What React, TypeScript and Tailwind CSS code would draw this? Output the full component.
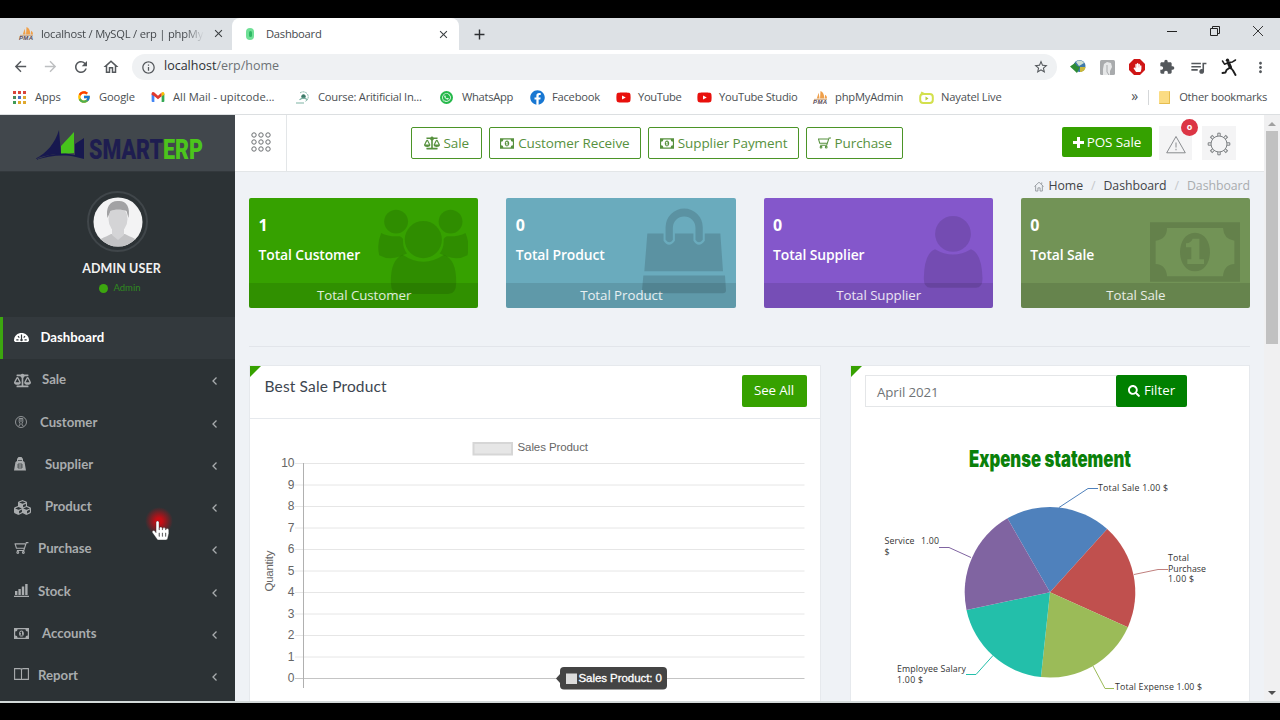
import React from "react";
import clsx from "clsx";
import {
  FaBalanceScale,
  FaCubes,
  FaFacebook,
  FaHandPaper,
  FaHandPointer,
  FaSearch,
  FaWhatsapp,
  FaYoutube,
} from "react-icons/fa";
import { FcGoogle } from "react-icons/fc";
import {
  MdAdd,
  MdArrowBack,
  MdArrowForward,
  MdClose,
  MdExtension,
  MdInfoOutline,
  MdMoreVert,
  MdOutlineHome,
  MdQueueMusic,
  MdRefresh,
  MdStarBorder,
} from "react-icons/md";

/* ---------- small icons ---------- */

const PmaIcon = () => (
  <svg viewBox="0 0 16 14" className="h-[13px] w-[15px] shrink-0 overflow-visible">
    <path d="M4 8 6 2 7 8zM7.5 8 8 0c3 1 4 4 4 8zM12.500 8 13 4c1.500 1 2 2 2 4z" fill="#f0a04a" />
    <path d="M1 9h14" stroke="#c9a27c" strokeWidth="1" />
    <text x="0" y="14" fontSize="6.500" fontWeight="900" fontStyle="italic" fontFamily="Liberation Sans, sans-serif" fill="#5a4a55" textLength="15">
      PMA
    </text>
  </svg>
);

const AppsIcon = () => (
  <svg viewBox="0 0 13 13" className="h-[13px] w-[13px] shrink-0">
    {["#d9453a", "#d9453a", "#d9453a", "#4b8a5a", "#4a6fc0", "#e0a92e", "#3f9b57", "#e0a92e", "#e0a92e"].map(
      (c, i) => (
        <rect key={i} x={(i % 3) * 5} y={Math.floor(i / 3) * 5} width="3" height="3" fill={c} />
      ),
    )}
  </svg>
);

const GmailIcon = () => (
  <svg viewBox="0 0 14 11" className="h-[10px] w-[14px] shrink-0">
    <path d="M0 2h3v9H1a1 1 0 0 1-1-1z" fill="#4285f4" />
    <path d="M11 2h3v8a1 1 0 0 1-1 1h-2z" fill="#34a853" />
    <path d="M0 2C0 0 2-.5 3 .6L7 4l4-3.400v4L7 8 3 4.800 0 3z" fill="#e0392d" />
    <path d="M11 .6C12-.5 14 0 14 2v1l-3 1.800z" fill="#fbbc04" />
  </svg>
);

const CourseIcon = () => (
  <svg viewBox="0 0 14 14" className="h-[14px] w-[14px] shrink-0" fill="none" stroke="#7fb3a3">
    <path d="M4 3a5 5 0 1 1 5 8.500" strokeDasharray="2 .7" />
    <circle cx="7.500" cy="6.500" r="1.800" fill="#3c7a68" stroke="#3c7a68" />
    <path d="M3.500 10c2-2.500 6-2.500 8 0M0 13h8" strokeWidth="1.200" />
  </svg>
);

const NayatelIcon = () => (
  <svg viewBox="0 0 15 13" className="h-[13px] w-[15px] shrink-0" fill="none" stroke="#d3e04c" strokeWidth="2">
    <rect x="1.200" y="3" width="12.600" height="9" rx="3" />
    <path d="M2 1.500 5 3" />
    <path d="m6.500 5.500 3 2-3 2z" fill="#b4c93a" stroke="none" />
  </svg>
);

const RunnerIcon = () => (
  <svg viewBox="0 0 18 18" className="h-[18px] w-[18px]" fill="none" stroke="#1d1d1d" strokeLinecap="round" strokeLinejoin="round">
    <circle cx="7.500" cy="2.200" r="1.700" fill="#1d1d1d" stroke="none" />
    <path d="m8.500 5 2 4.500" strokeWidth="3.200" />
    <path d="M8 4.800 4.500 6.200 2.500 3M9 4.500l3.500-.6L15.500 2" strokeWidth="1.500" />
    <path d="M10 9.500 6.500 12l-1 2.500L2.500 15M10.500 9.500l2.500 3 2.500 4.500" strokeWidth="1.900" />
  </svg>
);

const PlusIcon = () => (
  <svg viewBox="0 0 11 11" className="h-[11px] w-[11px]" fill="currentColor">
    <path d="M4 0h3v4h4v3H7v4H4V7H0V4h4z" />
  </svg>
);

const DashIcon = () => (
  <svg viewBox="0 0 15 9" className="-mt-[2px] h-[9px] w-[15px]">
    <path d="M0 7.500C0-2.500 15-2.500 15 7.500L14 9H1z" fill="currentColor" />
    <path d="M7.500 8V1.500M2.300 6.800h2.200M10.500 6.800h2.200M4 3.200l1.300 1.500M11 3.200 9.700 4.700" stroke="#33393d" strokeWidth="1.200" />
    <circle cx="7.500" cy="7" r="1.200" fill="#33393d" />
  </svg>
);

const UserCircleIcon = () => (
  <svg viewBox="0 0 12 12" className="-mt-[2px] h-3 w-3" fill="none" stroke="currentColor" strokeWidth=".8">
    <circle cx="6" cy="6" r="5.500" />
    <path d="M4.200 2.500h3.600v3L7 7.500V9l1.500 1M4.200 2.500v3L5 7.500V9l-1.500 1M6 3v3" />
  </svg>
);

const WeightIcon = () => (
  <svg viewBox="0 0 12 14" className="-mt-[2px] h-[14px] w-[12px]">
    <path d="M3 4V2l1.500-2h3L9 2v2l1.500 1L12 13.500H0L1.500 5z" fill="currentColor" />
    <path d="M4 3.500h4M4 7h4v4H4zM4 9h4" stroke="#2c3235" strokeWidth=".7" fill="none" />
  </svg>
);

const CartIcon = ({ className }: { className?: string }) => (
  <svg viewBox="0 0 15 13" className={className} fill="none" stroke="currentColor" strokeWidth="1.200">
    <path d="M0 2h11.500M.6 2 2 6.800h8.500M15 .7h-2.300L10 9.200H2.500" />
    <circle cx="3.500" cy="11.300" r="1" />
    <circle cx="9.500" cy="11.300" r="1" />
  </svg>
);

const BarsIcon = () => (
  <svg viewBox="0 0 15 13" className="-mt-[2px] h-[13px] w-[15px]" fill="currentColor">
    <path d="M0 11.800h15V13H0zM1 7h2.400v4H1zM4.400 5h2.400v6H4.400zM7.800 2.500h2.400V11H7.800zM11.200 0h2.400v11h-2.400z" />
  </svg>
);

const BookIcon = () => (
  <svg viewBox="0 0 15 13" className="-mt-[3px] h-[13px] w-[15px]" fill="none" stroke="currentColor" strokeWidth="1.100">
    <path d="M.6 .6h5.200q1.700 0 1.700 1v10.400q0-.6-1.700-.6H.6zM14.400 .6H9.200q-1.700 0-1.700 1v10.400q0-.6 1.700-.6h5.200z" />
  </svg>
);

const CashIcon = ({ className }: { className?: string }) => (
  <svg viewBox="0 0 15 11" className={className}>
    <path
      fillRule="evenodd"
      d="M0 0h15v11H0zM3.600 1.200A2.400 2.400 0 0 1 1.200 3.600v3.800a2.400 2.400 0 0 1 2.400 2.400h7.800a2.400 2.400 0 0 1 2.400-2.400V3.600a2.400 2.400 0 0 1-2.400-2.400z"
      fill="currentColor"
    />
    <path
      fillRule="evenodd"
      d="M7.500 2.400c3.200 0 3.200 6.200 0 6.200s-3.200-6.200 0-6.200zM7.200 3.600l-1 .7v.6h.7v1.900h-.7v.7h2.500v-.7H8V3.600z"
      fill="currentColor"
    />
  </svg>
);

const HouseIcon = () => (
  <svg viewBox="0 0 11 11" className="h-[11px] w-[10px]" fill="none" stroke="#8b8f94" strokeWidth=".9">
    <path d="M.5 5.500 5.500.8l5 4.700M1.800 4.800v5.700h2.500V7h2.400v3.500h2.500V4.800M8.500 3V1" />
  </svg>
);

/* ---------- browser window ---------- */

interface BookmarkItem {
  label: string;
  icon: React.ReactNode;
  className: string;
}

const bookmarks: BookmarkItem[] = [
  { label: "Apps", icon: <AppsIcon />, className: "w-[64px] tracking-[-0.1px]" },
  { label: "Google", icon: <FcGoogle size={14} />, className: "w-[74px] tracking-[-0.15px]" },
  { label: "All Mail - upitcode...", icon: <GmailIcon />, className: "w-[145px]" },
  { label: "Course: Aritificial In...", icon: <CourseIcon />, className: "w-[144px] tracking-[-0.23px]" },
  { label: "WhatsApp", icon: <FaWhatsapp size={10} className="box-content rounded-full bg-[#25b84a] p-[1.500px] text-white" />, className: "w-[90px] tracking-[-0.3px]" },
  { label: "Facebook", icon: <FaFacebook size={15} className="text-[#1877d2]" />, className: "w-[86px] tracking-[-0.25px]" },
  { label: "YouTube", icon: <FaYoutube size={15} className="text-[#e8100c]" />, className: "w-[81px] tracking-[-0.35px]" },
  { label: "YouTube Studio", icon: <FaYoutube size={15} className="text-[#e8100c]" />, className: "w-[116px] tracking-[-0.27px]" },
  { label: "phpMyAdmin", icon: <PmaIcon />, className: "w-[106px] tracking-[-0.2px]" },
  { label: "Nayatel Live", icon: <NayatelIcon />, className: "w-[100px] tracking-[-0.2px]" },
];

function TabStrip() {
  return (
    <div className="flex h-8 items-center bg-[#dde1e5] text-[11.500px] text-[#45494d]">
      <div className="flex w-[232px] items-center pl-[19px]">
        <PmaIcon />
        <span className="ml-[7px] w-[163px] overflow-hidden text-[11.200px] tracking-[-0.22px] whitespace-nowrap [mask-image:linear-gradient(to_right,black_88%,transparent)]">
          localhost / MySQL / erp | phpMy
        </span>
        <MdClose size={13} className="ml-[8px] text-[#3c4043]" />
      </div>
      <div className="flex h-full w-[227px] items-center rounded-t-lg bg-white pl-[14px]">
        <span className="flex h-3 w-2 items-center justify-center rounded-full bg-[#6fe096]">
          <span className="h-[6px] w-[3px] rounded-full bg-[#2fb865]" />
        </span>
        <span className="ml-[12px] w-[171px] text-[11.200px] tracking-[-0.25px]">Dashboard</span>
        <MdClose size={13} className="text-[#3c4043]" />
      </div>
      <MdAdd size={17} className="ml-[12px] text-[#2c2f32]" />
      <div className="-mt-[6px] ml-auto flex items-center gap-[33px] pr-[17px] text-[#222]">
        <span className="h-px w-[10px] bg-[#222]" />
        <svg viewBox="0 0 10 10" className="h-[10px] w-[10px]" fill="none" stroke="currentColor">
          <path d="M.5 2.500h7v7h-7zM2.500 2.500v-2h7v7h-2" />
        </svg>
        <svg viewBox="0 0 10 10" className="h-[10px] w-[10px]" stroke="currentColor" strokeWidth=".9">
          <path d="m0 0 10 10M10 0 0 10" />
        </svg>
      </div>
    </div>
  );
}

function AddressBar() {
  return (
    <div className="flex h-[33px] items-center pt-px pl-[12px] text-[#54585c]">
      <div className="flex w-[120px] gap-[13px]">
        <MdArrowBack size={17} />
        <MdArrowForward size={17} className="text-[#bdbfc1]" />
        <MdRefresh size={18} />
        <MdOutlineHome size={18} className="-ml-px" />
      </div>
      <div className="flex h-[26px] w-[925px] items-center rounded-full bg-[#eff1f3] pr-[8px] pl-[9px]">
        <MdInfoOutline size={15} />
        <span className="ml-[8px] pb-px text-[12.500px] text-[#6d7175]">
          <span className="text-[#2d3033]">localhost</span>/erp/home
        </span>
        <MdStarBorder size={16} className="ml-auto" />
      </div>
      <div className="ml-[13px] flex w-[210px] items-center justify-between pr-[12px]">
        <svg viewBox="0 0 16 14" className="h-[14px] w-[16px]">
          <circle cx="9.500" cy="6" r="6" fill="#3e78a8" />
          <path d="M6 2c3-3 7-1 8 1L9 6z" fill="#cfe0d2" />
          <path d="M10 7h5.500c0 3-3 5-5.500 5z" fill="#c9b83a" />
          <path d="M0 6.500 5 3l2 3 3 1-3 6z" fill="#2d8c34" />
        </svg>
        <svg viewBox="0 0 15 15" className="h-[15px] w-[15px]">
          <rect width="15" height="15" rx="1.500" fill="#a9abad" />
          <path d="M3 15V9l1-5 3-2 4 1 1 4-2 4v4z" fill="#e6e7e8" />
          <path d="M7 5v7l2 3" stroke="#a9abad" fill="none" />
        </svg>
        <span className="relative flex h-[16px] w-[16px] items-center justify-center text-white">
          <svg viewBox="0 0 16 16" className="absolute inset-0 h-4 w-4">
            <path d="M5 0h6l5 5v6l-5 5H5l-5-5V5z" fill="#cf1616" />
          </svg>
          <FaHandPaper size={9} className="relative" />
        </span>
        <MdExtension size={16} />
        <MdQueueMusic size={19} className="-mr-[2px]" />
        <RunnerIcon />
        <MdMoreVert size={17} className="-mr-px" />
      </div>
    </div>
  );
}

function BookmarkBar() {
  return (
    <div className="flex h-[31px] items-center pr-[13px] pb-[2px] pl-[13px] text-[11.200px] text-[#4b4f53]">
      {bookmarks.map((b) => (
        <div key={b.label} className={clsx("flex items-center whitespace-nowrap", b.className)}>
          <span className="flex w-[22px] shrink-0">{b.icon}</span>
          {b.label}
        </div>
      ))}
      <span className="ml-auto pb-[3px] text-[14px] leading-none">»</span>
      <span className="mx-[10px] h-[15px] w-px bg-[#d5d7d9]" />
      <span className="mr-[9px] h-[13px] w-[11px] rounded-[1px] border-r border-b border-[#e6bd4e] bg-[#fbdc83]" />
      <span className="tracking-[-0.27px] whitespace-nowrap">Other bookmarks</span>
    </div>
  );
}

/* ---------- sidebar ---------- */

interface MenuItem {
  label: string;
  icon: React.ReactNode;
  indent: string;
  active?: boolean;
}

const menu: MenuItem[] = [
  { label: "Dashboard", icon: <DashIcon />, indent: "w-[26.500px]", active: true },
  { label: "Sale", icon: <FaBalanceScale size={17} />, indent: "w-[28px]" },
  { label: "Customer", icon: <UserCircleIcon />, indent: "w-[26px] pl-px" },
  { label: "Supplier", icon: <WeightIcon />, indent: "w-[31px]" },
  { label: "Product", icon: <FaCubes size={17} />, indent: "w-[31px]" },
  { label: "Purchase", icon: <CartIcon className="-mt-[2px] h-3 w-[15px]" />, indent: "w-[24px]" },
  { label: "Stock", icon: <BarsIcon />, indent: "w-[24px]" },
  { label: "Accounts", icon: <CashIcon className="-mt-px h-[11px] w-[15px]" />, indent: "w-[28px]" },
  { label: "Report", icon: <BookIcon />, indent: "w-[24px]" },
];

function Sidebar() {
  return (
    <aside className="relative w-[235px] shrink-0 overflow-hidden bg-[#2c3235] font-['Lato',sans-serif]">
      <div className="h-[57px] border-b border-[#33383c] bg-[#41474c] pt-[14px] pl-[35px]">
        <svg viewBox="0 0 170 40" className="h-[40px] w-[170px]">
          <path d="M0 30C12 24 20 14 24 1l2 24C16 25 8 27 0 30z" fill="#17184f" />
          <path d="M26 25V17L39 3v21z" fill="#47c41b" />
          <path d="M40 24V15l9-6v21l-8-2C28 25 14 27 0 31c16-7 28-8 40-5z" fill="#17184f" />
          <text x="54" y="29.500" fontSize="27" fontWeight="900" fontFamily="Roboto, sans-serif" fill="#1e1d50" textLength="114" lengthAdjust="spacingAndGlyphs">
            SMART<tspan fill="#4cc51c">ERP</tspan>
          </text>
        </svg>
      </div>

      <div className="flex h-[145px] flex-col items-center pt-[19px]">
        <div className="flex h-[61px] w-[61px] items-center justify-center rounded-full border-2 border-[#40464a]">
          <svg viewBox="0 0 50 50" className="h-[50px] w-[50px]">
            <clipPath id="avatar">
              <circle cx="25" cy="25" r="24.500" />
            </clipPath>
            <g clipPath="url(#avatar)">
              <rect width="50" height="50" fill="#f3f3f4" />
              <path d="M3 50c0-9 9-9 15-13h14c6 4 15 4 15 13z" fill="#c3c3c5" />
              <path d="M19 30h12v8l-6 5-6-5z" fill="#d4d4d6" />
              <ellipse cx="25" cy="22" rx="9.500" ry="13" fill="#d4d4d6" />
              <path d="M14.500 21c-2-10 2-17 10-17 9-1 13 6 11 17l-2-7c-5-2-12-2-16 0z" fill="#a2a2a4" />
            </g>
          </svg>
        </div>
        <p className="mt-[8px] ml-[8px] text-[12.500px] leading-[18px] font-bold tracking-[0.1px] text-[#f1f1f1]">ADMIN USER</p>
        <p className="mt-[4px] ml-[5px] flex items-center gap-[5px] text-[9.500px] leading-3 text-[#2f8a1f]">
          <span className="h-[9px] w-[9px] rounded-full bg-[#3ca60f]" />
          Admin
        </p>
      </div>

      <nav>
        {menu.map((m) => (
          <a
            key={m.label}
            className={clsx(
              "flex h-[42.250px] items-center border-l-[3px] pl-[11px] text-[13.200px] font-bold",
              m.active ? "border-[#3ca60f] bg-[#33393d] text-white" : "border-transparent text-[#a9acae]",
            )}
          >
            <span className={clsx("flex shrink-0", m.indent)}>{m.icon}</span>
            {m.label}
            {!m.active && (
              <svg viewBox="0 0 5 8" className="mt-[2px] mr-[18px] ml-auto h-2 w-[5px]" fill="none" stroke="currentColor" strokeWidth="1.300">
                <path d="M4.500.5 1 4l3.500 3.500" />
              </svg>
            )}
          </a>
        ))}
      </nav>

      {/* click highlight and pointer */}
      <div className="absolute top-[392px] left-[145px] h-7 w-7 rounded-full bg-[radial-gradient(circle,#c80d14_15%,transparent_70%)]" />
      <FaHandPointer size={19} className="absolute top-[406px] left-[151px] fill-white stroke-[#222] [stroke-width:10]" />
    </aside>
  );
}

/* ---------- page header ---------- */

function TopBar() {
  const outline =
    "flex h-8 items-center justify-center gap-1 rounded-[2px] border border-[#4b9427] text-[13.500px] tracking-[-0.1px] text-[#57913e] whitespace-nowrap";
  return (
    <header className="flex h-[57px] border-b border-[#e3e6e8] bg-white">
      <div className="flex w-[52px] items-center justify-center border-r border-[#e3e6e8]">
        <svg viewBox="0 0 20 20" className="-mt-[3px] h-5 w-5" fill="none" stroke="#6b6e71">
          {[0, 1, 2].map((r) =>
            [0, 1, 2].map((c) => <circle key={`${r}${c}`} cx={3 + c * 7} cy={3 + r * 7} r="2.200" />),
          )}
        </svg>
      </div>
      <div className="flex gap-[7px] pt-[12px] pl-[124px]">
        <button className={clsx(outline, "w-[70.500px]")}>
          <FaBalanceScale size={16} /> Sale
        </button>
        <button className={clsx(outline, "w-[152.700px]")}>
          <CashIcon className="h-[11px] w-[14px]" /> Customer Receive
        </button>
        <button className={clsx(outline, "w-[150.800px]")}>
          <CashIcon className="h-[11px] w-[14px]" /> Supplier Payment
        </button>
        <button className={clsx(outline, "w-[97.500px]")}>
          <CartIcon className="h-[12px] w-[13px]" /> Purchase
        </button>
      </div>
      <div className="ml-auto flex pt-[12px] pr-[28px]">
        <button className="flex h-[30px] w-[90px] items-center justify-center gap-[3px] rounded-[2px] bg-[#35a100] text-[13.500px] tracking-[-0.1px] text-white">
          <PlusIcon /> POS Sale
        </button>
        <div className="relative -mt-px ml-[7px] flex h-[34px] w-[33px] items-center justify-center bg-[#f4f4f5]">
          <svg viewBox="0 0 20 18" className="mt-[3px] h-[19px] w-5" fill="none" stroke="#7d8083" strokeWidth=".9">
            <path d="M10 1 19.300 17.300H.7zM10 7v5M10 13.300v1.500" />
          </svg>
          <span className="absolute -top-[7px] left-[22px] flex h-[17px] w-[17px] items-center justify-center rounded-full bg-[#dc3545] pb-px text-[9px] font-bold text-white">
            o
          </span>
        </div>
        <div className="-mt-px ml-[10px] flex h-[34px] w-[34px] items-center justify-center bg-[#f4f4f5]">
          <svg viewBox="-12 -12 24 24" className="mt-[2px] h-6 w-6" fill="none" stroke="#7d8083">
            <circle r="8" />
            {[0, 45, 90, 135, 180, 225, 270, 315].map((a) => (
              <path key={a} d="M-1.200-8v-2.800h2.400v2.800" transform={`rotate(${a})`} />
            ))}
          </svg>
        </div>
      </div>
    </header>
  );
}

/* ---------- stat cards ---------- */

interface Stat {
  value: number;
  label: string;
  color: string;
  art: React.ReactNode;
}

const stats: Stat[] = [
  {
    value: 1,
    label: "Total Customer",
    color: "bg-[#36a100]",
    art: (
      <svg viewBox="415 290 270 265" className="absolute top-[9px] right-[10px] h-[88px] w-[90px] fill-black/12">
        <circle cx="469" cy="334" r="36" />
        <circle cx="633" cy="334" r="36" />
        <circle cx="551" cy="388" r="56" />
        <path d="M424 368q22 12 56 10 6 2 10 8-2 26 12 44l-22 9q-34 12-62-4-8-34 6-67z" />
        <path d="M678 368q-22 12-56 10-6 2-10 8 2 26-12 44l22 9q34 12 62-4 8-34-6-67z" />
        <path d="M489 434q62 42 124 0 38 14 37 84 0 34-24 34H478q-24 0-25-34-1-70 36-84z" />
      </svg>
    ),
  },
  {
    value: 0,
    label: "Total Product",
    color: "bg-[#6aabbd]",
    art: (
      <svg viewBox="5 295 253 258" className="absolute top-[10px] right-[10px] h-[86px] w-[84px] fill-black/14">
        <path d="M76 390v-38a56 56 0 0 1 112 0v38q-12 16-22 0v-36a34 34 0 0 0-68 0v36q-10 16-22 0z" />
        <path d="M21 371h49v22q16 24 34 0v-22h56v22q16 24 34 0v-22h47l8 114H12zM9 498h246l3 44q0 9-9 9H14q-9 0-9-9z" />
      </svg>
    ),
  },
  {
    value: 0,
    label: "Total Supplier",
    color: "bg-[#8457cb]",
    art: (
      <svg viewBox="849 313 178 220" className="absolute top-[17px] right-[10px] h-[73px] w-[60px] fill-black/12">
        <circle cx="938" cy="370" r="54" />
        <path d="M884 416q54 32 108 0 33 12 35 88 0 28-20 28H870q-20 0-20-28 1-76 34-88z" />
      </svg>
    ),
  },
  {
    value: 0,
    label: "Total Sale",
    color: "bg-[#729356]",
    art: (
      <svg viewBox="510 155 270 178" className="absolute top-[24px] right-[10px] h-[60px] w-[90px] fill-black/12">
        <path
          fillRule="evenodd"
          d="M510 155h270v178H510zM561 172q0 34-34 38v70q32 2 34 37h168q2-35 34-37v-70q-32-4-34-38z"
        />
        <path
          fillRule="evenodd"
          d="M645 186c60 0 60 116 0 116s-60-116 0-116zM638 204q-4 12-20 14v12h16v36h-12v14h50v-14h-14v-62z"
        />
      </svg>
    ),
  },
];

function StatCard({ stat }: { stat: Stat }) {
  return (
    <div className={clsx("relative flex h-[110px] flex-col overflow-hidden rounded-[2px] text-white", stat.color)}>
      {stat.art}
      <p className="pt-[16px] pl-[9.500px] text-[16px] leading-[22px] font-bold">{stat.value}</p>
      <p className="pt-[9px] pl-[9.500px] text-[13.900px] leading-5 font-semibold tracking-[-0.1px]">{stat.label}</p>
      <p className="mt-auto h-[25px] bg-black/10 pl-px text-center text-[13.300px] leading-[25px] tracking-[-0.05px] text-white/85">{stat.label}</p>
    </div>
  );
}

/* ---------- panels ---------- */

const Corner = () => (
  <span className="absolute top-0 left-0 border-t-[11px] border-r-[11px] border-t-[#36a100] border-r-transparent" />
);

function SalesChart() {
  const ticks = [10, 9, 8, 7, 6, 5, 4, 3, 2, 1, 0];
  return (
    <svg viewBox="250 419 571 282" className="block h-[282px] w-[571px]" fontFamily="Liberation Sans, Arial, sans-serif" fontSize="11.500" fill="#666">
      <rect x="473.500" y="443" width="38.500" height="11.500" fill="#e6e6e6" stroke="#d6d6d6" strokeWidth="2" />
      <text x="517.500" y="451" textLength="70.500">Sales Product</text>
      {ticks.map((t, i) => {
        const y = 463.500 + i * 21.500;
        return (
          <g key={t}>
            <path d={`M295 ${y}H804.500`} stroke={t === 0 ? "#c4c4c4" : "#e6e6e6"} />
            <text x="294.500" y={y + 3.500} textAnchor="end" fontSize="12">{t}</text>
          </g>
        );
      })}
      <path d="M303.500 463V688" stroke="#b0b0b0" />
      <text transform="translate(273 571) rotate(-90)" textAnchor="middle" textLength="41">Quantity</text>
      <path d="M556 678.500 560 674v9z" fill="#444" />
      <rect x="560" y="667" width="107" height="22.500" rx="4" fill="#444" />
      <rect x="566" y="673.500" width="11" height="10.500" fill="#dcdcdc" />
      <text x="578.500" y="681.500" fill="#fff" stroke="#fff" strokeWidth=".3" textLength="83.500">Sales Product: 0</text>
    </svg>
  );
}

const slices = ["#4f81bc", "#c0504e", "#9bbb58", "#23bfaa", "#8064a1"];

function ExpensePie() {
  const cx = 1050;
  const cy = 592.300;
  const r = 85.300;
  const point = (deg: number) => {
    const a = (deg * Math.PI) / 180;
    return `${(cx + r * Math.cos(a)).toFixed(2)} ${(cy + r * Math.sin(a)).toFixed(2)}`;
  };
  return (
    <svg viewBox="851 407 398 294" className="block h-[294px] w-[398px]" fontFamily="Open Sans, sans-serif" fontSize="8.800" fill="#333">
      <text x="969" y="466.500" fontFamily="Inter, sans-serif" fontSize="22.500" fontWeight="900" fill="#0a800a" textLength="162" lengthAdjust="spacingAndGlyphs">
        Expense statement
      </text>
      {slices.map((color, i) => {
        const start = -119.900 + i * 72;
        return <path key={color} d={`M${cx} ${cy}L${point(start)}A${r} ${r} 0 0 1 ${point(start + 72)}Z`} fill={color} />;
      })}
      <g fill="none">
        <path d="M1059 507.500 1088 488.500h10" stroke="#4f81bc" />
        <path d="M1134 574.500 1158 569.500h10" stroke="#c0807e" />
        <path d="M1093 666 1105 688.500h9" stroke="#9bbb58" />
        <path d="M993 655.500 976 674.500h-10" stroke="#23bfaa" />
        <path d="M971 557.500 949 547.500h-10" stroke="#8064a1" />
      </g>
      <text x="1098" y="491" textLength="70">Total Sale 1.00 $</text>
      <text x="1168" y="561" textLength="21">Total</text>
      <text x="1168" y="571.500" textLength="38">Purchase</text>
      <text x="1168" y="582" textLength="26">1.00 $</text>
      <text x="1115" y="690" textLength="87">Total Expense 1.00 $</text>
      <text x="897" y="672" textLength="69">Employee Salary</text>
      <text x="897" y="682.500" textLength="26">1.00 $</text>
      <text x="884.500" y="544" textLength="30">Service</text>
      <text x="921" y="544" textLength="18">1.00</text>
      <text x="884.500" y="554.500">$</text>
    </svg>
  );
}

function Panels() {
  return (
    <div className="mt-[18px] flex h-[336px] justify-between">
      <section className="relative w-[572px] border border-b-0 border-[#e6e9ed] bg-white">
        <Corner />
        <div className="flex h-[53px] justify-between border-b border-[#e6e9ed] pt-[9px] pr-[13.500px] pl-[14.500px]">
          <h4 className="pt-px font-['Lato',sans-serif] text-[15.500px] leading-5 tracking-[0.15px] text-[#3d4650]">Best Sale Product</h4>
          <button className="h-8 w-[65px] rounded-[2px] bg-[#36a100] text-[13.300px] tracking-[-0.1px] text-white">See All</button>
        </div>
        <SalesChart />
      </section>
      <section className="relative w-[400px] border border-b-0 border-[#e6e9ed] bg-white">
        <Corner />
        <div className="flex h-[41px] pt-[9px] pl-[14px]">
          <div className="h-8 w-[251px] border border-r-0 border-[#e4e6e8] pl-[11px] text-[13.300px] leading-[32px] tracking-[-0.1px] text-[#6f7376]">April 2021</div>
          <button className="flex h-8 w-[71px] items-center justify-center gap-1 rounded-[2px] bg-[#008000] text-[13.300px] text-white">
            <FaSearch size={12} /> Filter
          </button>
        </div>
        <ExpensePie />
      </section>
    </div>
  );
}

function Scrollbar() {
  return (
    <div className="flex w-4 shrink-0 flex-col items-center bg-[#f0f0f1] pt-[7px] pb-[6px]">
      <span className="border-x-[4px] border-b-[4px] border-x-transparent border-b-[#a0a0a0]" />
      <span className="mt-[5px] h-[213px] w-3 bg-[#c1c1c1]" />
      <span className="mt-auto border-x-[4px] border-t-[4px] border-x-transparent border-t-[#505050]" />
    </div>
  );
}

function App() {
  return (
    <div className="flex h-[720px] w-[1280px] flex-col overflow-hidden bg-black pt-[18px] font-['Open_Sans',sans-serif]">
      <div className="h-[97px] shrink-0 border-b border-[#dcdfe1] bg-white">
        <TabStrip />
        <AddressBar />
        <BookmarkBar />
      </div>

      <div className="flex h-[586px] shrink-0 overflow-hidden bg-[#eff2f6]">
        <Sidebar />
        <div className="min-w-0 flex-1">
          <TopBar />
          <main className="pr-[14px] pl-[14px]">
            <div className="flex h-[26px] items-center justify-end pt-[2px] text-[12.300px] tracking-[-0.05px] text-[#3f4347]">
              <HouseIcon />
              <span className="ml-[4px]">Home</span>
              <span className="mx-[8px] text-[#c5c8cb]">/</span>
              <span>Dashboard</span>
              <span className="mx-[8px] text-[#c5c8cb]">/</span>
              <span className="text-[#a9acaf]">Dashboard</span>
            </div>
            <div className="grid grid-cols-4 gap-7">
              {stats.map((s) => (
                <StatCard key={s.label} stat={s} />
              ))}
            </div>
            <hr className="mt-[38px] border-[#e2e5ea]" />
            <Panels />
          </main>
        </div>
        <Scrollbar />
      </div>
      <div className="h-[2px] shrink-0 bg-[#d3d9d9]" />
    </div>
  );
}

export default App;
